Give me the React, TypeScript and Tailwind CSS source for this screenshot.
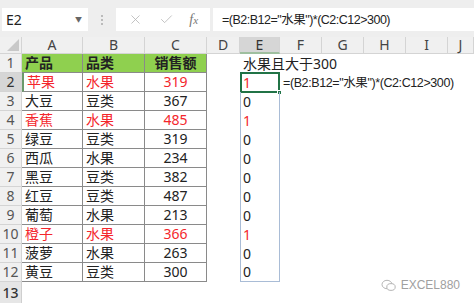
import { Check, X } from "lucide-react"
import type { ReactNode } from "react"

const font = { fontFamily: '"Noto Sans", "Noto Sans CJK SC", sans-serif' }
const arial = { fontFamily: '"Liberation Sans", "Noto Sans CJK SC", sans-serif' }

const widths = ["w-[22px]", "w-[61px]", "w-[62px]", "w-[62px]", "w-[33px]", "w-[40px]", "w-[42px]", "w-[42px]", "w-[42px]", "w-[42px]", "w-[26px]"]
const cols = ["A", "B", "C", "D", "E", "F", "G", "H", "I", "J"]

const rows = [
  { name: "苹果", kind: "水果", sales: 319, hit: true },
  { name: "大豆", kind: "豆类", sales: 367, hit: false },
  { name: "香蕉", kind: "水果", sales: 485, hit: true },
  { name: "绿豆", kind: "豆类", sales: 319, hit: false },
  { name: "西瓜", kind: "水果", sales: 234, hit: false },
  { name: "黑豆", kind: "豆类", sales: 382, hit: false },
  { name: "红豆", kind: "豆类", sales: 487, hit: false },
  { name: "葡萄", kind: "水果", sales: 213, hit: false },
  { name: "橙子", kind: "水果", sales: 366, hit: true },
  { name: "菠萝", kind: "水果", sales: 263, hit: false },
  { name: "黄豆", kind: "豆类", sales: 300, hit: false },
]

function Cell({ i, className = "", children }: { i: number; className?: string; children?: ReactNode }) {
  return <div className={`${widths[i]} shrink-0 h-full flex items-center text-[14px] ${className}`}>{children}</div>
}

function RowHead({ n, active }: { n: number; active?: boolean }) {
  return (
    <Cell i={0} className={`justify-center border-b border-r border-[#d4d4d4] ${active ? "bg-[#d6d6d6] text-[#333]" : "bg-[#f0f0f0] text-[#555]"}`}>
      {n}
    </Cell>
  )
}

const tbl = "border-b border-r border-[#8a8a8a]"

export default function App() {
  return (
    <div className="w-[474px] h-[303px] overflow-hidden bg-white text-[#222] leading-[18px] flex flex-col" style={font}>
      {/* toolbar */}
      <div className="h-[37px] shrink-0 bg-[#eeeeee] flex items-start pt-[8px]">
        <div className="ml-[2px] w-[86px] h-[23px] bg-white flex items-center px-[4px]">
          <span className="text-[14px] text-[#222]">E2</span>
          <span className="ml-auto mr-[2px] text-[7px] text-[#666]">▼</span>
        </div>
        <div className="w-[28px] h-[23px] flex flex-col items-center justify-center gap-[2px]">
          <span className="w-[2px] h-[2px] bg-[#bbb]" />
          <span className="w-[2px] h-[2px] bg-[#bbb]" />
          <span className="w-[2px] h-[2px] bg-[#bbb]" />
        </div>
        <div className="w-[94px] h-[23px] bg-white flex items-center justify-around px-[4px]">
          <X size={15} strokeWidth={1.3} className="text-[#b5b5b5]" />
          <Check size={15} strokeWidth={1.3} className="text-[#b5b5b5]" />
          <span className="text-[14px] italic text-[#777]" style={{ fontFamily: '"Liberation Serif", serif' }}>
            f<span className="text-[11px]">x</span>
          </span>
        </div>
        <div className="ml-[3px] flex-1 h-[23px] bg-white flex items-center pl-[9px] text-[#222]">
          <span className="text-[12.5px] tracking-[-0.5px] whitespace-nowrap" style={arial}>
            =(B2:B12="水果")*(C2:C12&gt;300)
          </span>
        </div>
      </div>

      {/* column headers */}
      <div className="flex h-[17px] shrink-0">
        <Cell i={0} className="relative bg-[#f0f0f0] border-b border-r border-[#d4d4d4]">
          <div className="absolute right-[2px] bottom-[2px] w-0 h-0 border-l-[12px] border-l-transparent border-b-[12px] border-b-[#c8c8c8]" />
        </Cell>
        {cols.map((c, k) => (
          <Cell
            key={c}
            i={k + 1}
            className={`justify-center border-r border-[#d4d4d4] ${
              c === "E" ? "bg-[#d6d6d6] text-[#333] border-b-2 border-b-[#9fbf9f]" : "bg-[#f0f0f0] text-[#444] border-b"
            }`}
          >
            {c}
          </Cell>
        ))}
      </div>

      {/* row 1 */}
      <div className="flex h-[19px] shrink-0">
        <RowHead n={1} />
        <Cell i={1} className={`bg-[#8fd04f] ${tbl} pl-[3px] font-bold`}>产品</Cell>
        <Cell i={2} className={`bg-[#8fd04f] ${tbl} pl-[3px] font-bold`}>品类</Cell>
        <Cell i={3} className={`bg-[#8fd04f] ${tbl} justify-center font-bold`}>销售额</Cell>
        <Cell i={4} />
        <Cell i={5} className="pl-[3px] whitespace-nowrap">水果且大于300</Cell>
      </div>

      {rows.map((r, i) => {
        const red = r.kind === "水果" && r.sales > 300
        const tc = red ? "text-[#f4262c]" : "text-[#222]"
        const first = i === 0
        const last = i === rows.length - 1
        return (
          <div key={i} className="flex h-[19px] shrink-0">
            <RowHead n={i + 2} active={first} />
            <Cell i={1} className={`${tbl} pl-[3px] ${tc} ${first ? "border-l-2 border-l-[#6a9a6a]" : ""}`}>{r.name}</Cell>
            <Cell i={2} className={`${tbl} pl-[3px] ${tc}`}>{r.kind}</Cell>
            <Cell i={3} className={`${tbl} justify-center ${tc}`}>{r.sales}</Cell>
            <Cell i={4} />
            <Cell
              i={5}
              className={`relative pl-[2px] border-x border-[#a9bcd6] ${last ? "border-b" : ""} ${r.hit ? "text-[#f4262c]" : "text-[#222]"}`}
            >
              {first && (
                <div className="absolute -left-px -top-px -right-px -bottom-px border-2 border-[#217346]">
                  <div className="absolute -right-[4px] -bottom-[4px] w-[5px] h-[5px] bg-[#217346] border border-white" />
                </div>
              )}
              {r.hit ? 1 : 0}
            </Cell>
            {first && (
              <Cell i={6} className="pl-[3px] whitespace-nowrap">
                <span className="text-[12.5px] tracking-[-0.4px]" style={arial}>
                  =(B2:B12="水果")*(C2:C12&gt;300)
                </span>
              </Cell>
            )}
          </div>
        )
      })}

      {/* row 13 */}
      <div className="flex flex-1 min-h-0">
        <div className="w-[22px] shrink-0 bg-[#e6e6e6] border-r border-[#cfcfcf] flex items-start pt-[2px] justify-center text-[14px] font-medium text-[#333]">
          13
        </div>
        <div className="flex-1 flex items-start justify-end pr-[14px]">
          <div className="flex items-center gap-[5px] text-[#a0a0a0] text-[12px] -mt-[6px]" style={arial}>
            <svg width="15" height="13" viewBox="0 0 15 13" fill="none" stroke="#b5b5b5" strokeWidth="1">
              <ellipse cx="6" cy="5.5" rx="5" ry="4.2" />
              <ellipse cx="10" cy="8" rx="4.2" ry="3.4" fill="white" />
            </svg>
            EXCEL880
          </div>
        </div>
      </div>
    </div>
  )
}
